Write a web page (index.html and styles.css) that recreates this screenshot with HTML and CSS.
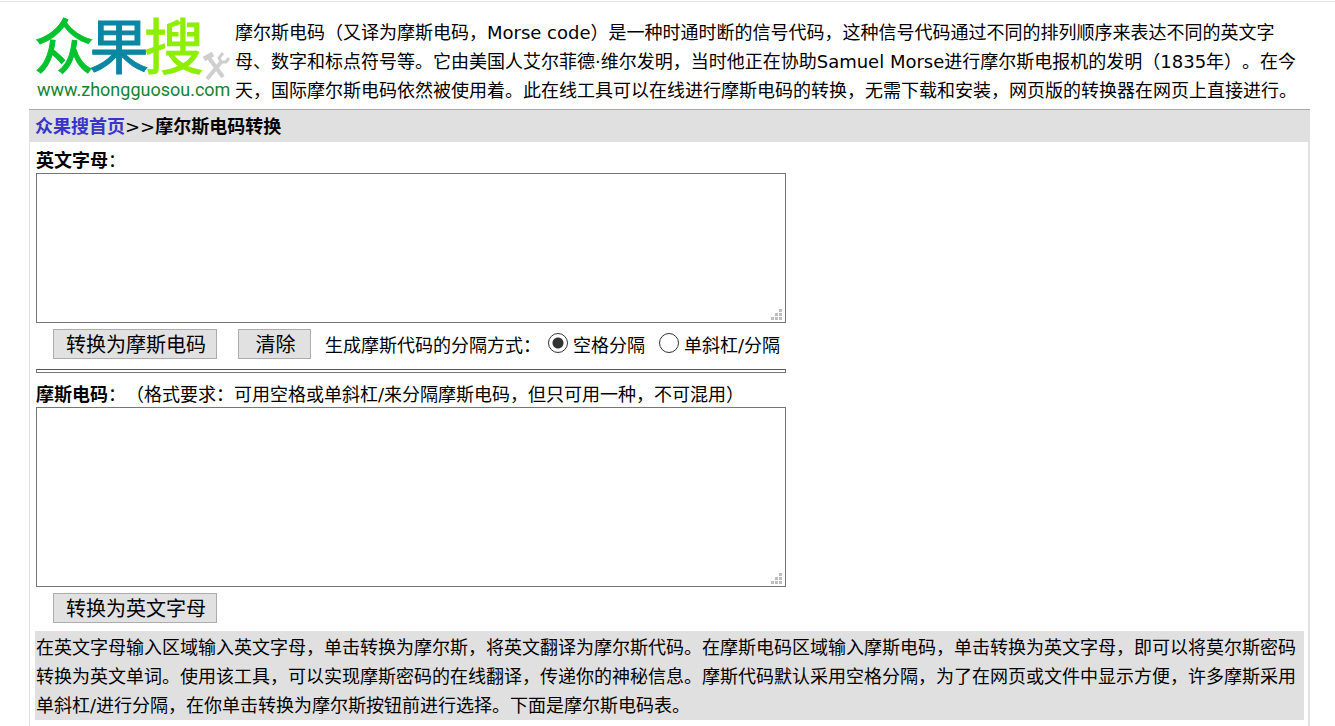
FILE: index.html
```html
<!DOCTYPE html>
<html lang="zh-CN">
<head>
<meta charset="utf-8">
<title>摩尔斯电码转换</title>
<link rel="stylesheet" href="styles.css">
</head>
<body>
<div class="page">
  <header class="header">
    <a class="logo" href="#" aria-label="众果搜">
      <svg width="194" height="98" viewBox="0 0 194 98">
        <g class="logo-name" text-anchor="middle">
          <text x="29" y="62" fill="#04c22e" stroke="#04c22e">众</text>
          <text x="84" y="62" fill="#0a87a3" stroke="#0a87a3">果</text>
          <text x="139" y="62" fill="#8eee00" stroke="#8eee00">搜</text>
        </g>
        <text class="logo-url" x="2" y="89">www.zhongguosou.com</text>
        <g fill="none" stroke="#cfcfcf">
          <path stroke-width="4" d="M174 51l14 19M187 54l-15 18"/>
          <path stroke-width="5" d="M169 52l9-5"/>
          <path stroke-width="3" d="M188 46l-4 5 2 4 5 0 3-4"/>
        </g>
      </svg>
    </a>
    <p class="intro">摩尔斯电码（又译为摩斯电码，Morse code）是一种时通时断的信号代码，这种信号代码通过不同的排列顺序来表达不同的英文字母、数字和标点符号等。它由美国人艾尔菲德·维尔发明，当时他正在协助Samuel Morse进行摩尔斯电报机的发明（1835年）。在今天，国际摩尔斯电码依然被使用着。此在线工具可以在线进行摩斯电码的转换，无需下载和安装，网页版的转换器在网页上直接进行。</p>
  </header>
  <nav class="crumbs"><a href="#">众果搜首页</a>&gt;&gt;<strong>摩尔斯电码转换</strong></nav>
  <main class="content">
    <form class="tool">
      <label class="caption" for="letters"><strong>英文字母</strong>：</label>
      <div class="field">
        <textarea class="letters" id="letters"></textarea>
        <svg class="grip" width="11" height="11" viewBox="0 0 11 11"><path d="M8 0h3v3H8zM4 4h3v3H4zM8 4h3v3H8zM0 8h3v3H0zM4 8h3v3H4zM8 8h3v3H8z"/></svg>
      </div>
      <div class="actions">
        <button class="wide" type="button">转换为摩斯电码</button>
        <button class="small" type="button">清除</button>
        <span class="separator">生成摩斯代码的分隔方式：</span>
        <label class="choice"><input type="radio" name="sep" checked>空格分隔</label>
        <label class="choice"><input type="radio" name="sep">单斜杠/分隔</label>
      </div>
      <hr class="rule">
      <label class="caption" for="morse"><strong>摩斯电码</strong>：（格式要求：可用空格或单斜杠/来分隔摩斯电码，但只可用一种，不可混用）</label>
      <div class="field">
        <textarea class="morse" id="morse"></textarea>
        <svg class="grip" width="11" height="11" viewBox="0 0 11 11"><path d="M8 0h3v3H8zM4 4h3v3H4zM8 4h3v3H8zM0 8h3v3H0zM4 8h3v3H4zM8 8h3v3H8z"/></svg>
      </div>
      <div class="actions">
        <button class="wide" type="button">转换为英文字母</button>
      </div>
    </form>
    <p class="note">在英文字母输入区域输入英文字母，单击转换为摩尔斯，将英文翻译为摩尔斯代码。在摩斯电码区域输入摩斯电码，单击转换为英文字母，即可以将莫尔斯密码转换为英文单词。使用该工具，可以实现摩斯密码的在线翻译，传递你的神秘信息。摩斯代码默认采用空格分隔，为了在网页或文件中显示方便，许多摩斯采用单斜杠/进行分隔，在你单击转换为摩尔斯按钮前进行选择。下面是摩尔斯电码表。</p>
  </main>
</div>
</body>
</html>
```
FILE: styles.css
```css
* {
  box-sizing: border-box;
}

body {
  margin: 0;
  padding-top: 1px;
  color: #000;
  font: 18px/29px Verdana, "DejaVu Sans", "Noto Sans CJK SC", sans-serif;
  text-spacing-trim: space-all;
}

.page {
  border-top: 1px solid #e0e0e0;
  padding: 0 25px 0 29px;
}

.header {
  display: flex;
  padding: 5px 6px 0;
  height: 107px;
}

.logo {
  flex: none;
  width: 200px;
}

.logo svg {
  display: block;
  overflow: visible;
}

.logo-name {
  font: 60px "Noto Sans CJK SC", sans-serif;
  stroke-width: 1px;
}

.logo-url {
  font: 18px Roboto, sans-serif;
  fill: #14862f;
}

.intro {
  flex: 1;
  margin: 11px 0 0;
}

.crumbs {
  height: 33px;
  padding: 2px 6px 0;
  border-top: 1px solid #aaa;
  background: #e0e0e0;
}

.crumbs a {
  color: #3a35c8;
  font-weight: bold;
  text-decoration: none;
}

.content {
  border: solid #e0e0e0;
  border-width: 0 2px 0 1px;
  padding: 4px 4px 8px 5px;
}

.tool {
  width: 751px;
  max-width: 100%;
  padding-left: 1px;
}

.caption {
  display: block;
  height: 27px;
  white-space: nowrap;
}

.field {
  position: relative;
}

.field textarea {
  display: block;
  width: 100%;
  border: 1px solid #767676;
  background: #fff;
  font: inherit;
  resize: none;
}

.letters {
  height: 150px;
}

.morse {
  height: 180px;
}

.grip {
  position: absolute;
  right: 4px;
  bottom: 3px;
  fill: #bfbfbf;
}

.actions {
  display: flex;
  align-items: flex-start;
  padding: 6px 0 0 17px;
  white-space: nowrap;
}

.actions button {
  height: 30px;
  padding: 0 0 0 2px;
  border: 1px solid #adadad;
  background: #e1e1e1;
  color: #000;
  font: 20px/28px "Noto Sans CJK SC", sans-serif;
}

.wide {
  width: 164px;
}

.small {
  width: 73px;
  margin: 0 14px 0 21px;
}

.separator {
  padding-top: 2px;
}

.choice {
  display: flex;
  align-items: center;
  margin-left: 7px;
  padding-top: 2px;
}

.choice + .choice {
  margin-left: 14px;
}

.choice input {
  appearance: none;
  width: 20px;
  height: 20px;
  margin: 0 5px 6px 0;
  border: 1px solid #333;
  border-radius: 50%;
  background: #fff;
}

.choice input:checked {
  background: radial-gradient(circle, #333 5px, #fff 6px);
}

.rule {
  height: 4px;
  margin: 9px 0 7px;
  border: 1px solid #767676;
  border-top-color: #555;
}

.note {
  margin: 8px 0 0;
  padding: 2px 1px 0;
  background: #e0e0e0;
}
```
